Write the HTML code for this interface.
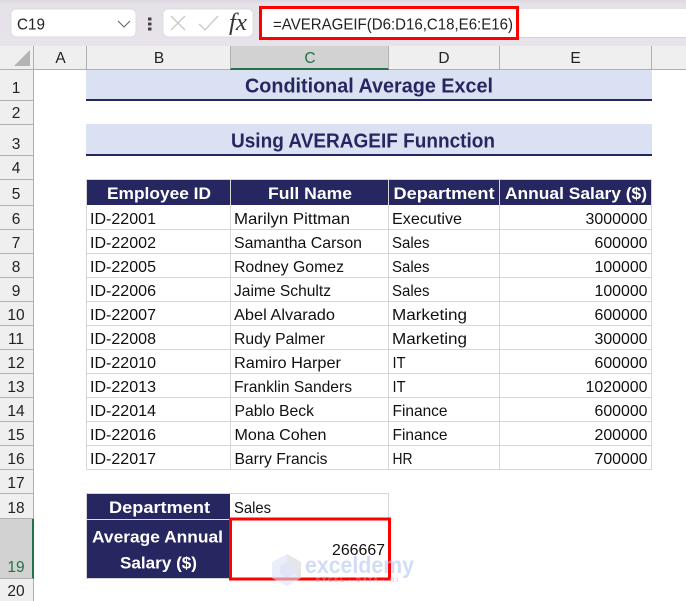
<!DOCTYPE html>
<html><head><meta charset="utf-8"><style>
html,body{margin:0;padding:0;background:#fff;width:686px;height:601px;overflow:hidden}
svg{display:block}
text{font-family:"Liberation Sans",sans-serif;font-size:16px;fill:#111}
.b{font-weight:bold;font-size:16.5px;fill:#fff}
.t{font-weight:bold;font-size:20.5px;fill:#262660}
.h{fill:#222;font-size:15.5px;text-anchor:middle}
</style></head><body>
<svg width="686" height="601" viewBox="0 0 686 601" xmlns="http://www.w3.org/2000/svg">
<defs><linearGradient id="tb" x1="0" y1="0" x2="0" y2="1"><stop offset="0" stop-color="#dcd8de"/><stop offset=".1" stop-color="#e6e2e9"/><stop offset="1" stop-color="#e8e3ea"/></linearGradient></defs>
<rect width="686" height="601" fill="#fff"/>
<!-- toolbar -->
<rect width="686" height="46" fill="url(#tb)"/>
<rect x="11" y="9" width="125" height="28" rx="5" fill="#fff" stroke="#dcdcdc"/>
<text x="17" y="29.5" style="font-size:16px;fill:#222" textLength="28" lengthAdjust="spacingAndGlyphs">C19</text>
<path d="M118 21l6 6 6-6" fill="none" stroke="#666" stroke-width="1.1"/>
<rect x="148" y="17.5" width="3.5" height="3" fill="#444"/><rect x="148" y="22.5" width="3.5" height="3" fill="#444"/><rect x="148" y="27.5" width="3.5" height="3" fill="#444"/>
<rect x="163" y="9" width="90" height="28" rx="5" fill="#fff" stroke="#dcdcdc"/>
<path d="M171 16l14 14M185 16l-14 14" fill="none" stroke="#c8c8c8" stroke-width="1.3"/>
<path d="M199 24l6 6 13-14" fill="none" stroke="#c8c8c8" stroke-width="1.3"/>
<text x="229" y="30" style="font-family:'Liberation Serif',serif;font-style:italic;font-size:24px;fill:#333" textLength="18" lengthAdjust="spacingAndGlyphs">fx</text>
<rect x="259" y="9" width="427" height="28" fill="#fff"/>
<rect x="259" y="37" width="427" height="1" fill="#d8d4da"/>
<text x="273" y="29.5" style="font-size:15.5px;fill:#222" textLength="240" lengthAdjust="spacingAndGlyphs">=AVERAGEIF(D6:D16,C18,E6:E16)</text>
<rect x="260.5" y="7.5" width="257" height="31" fill="none" stroke="#f00" stroke-width="3"/>
<!-- headers -->
<rect y="46" width="686" height="24" fill="#efefef"/>
<rect x="0" y="70" width="33.5" height="531" fill="#efefef"/>
<rect x="230.5" y="46" width="158" height="23" fill="#d2d2d2"/>
<rect x="230" y="68" width="159" height="2" fill="#217346"/>
<rect x="0" y="69" width="230" height="1" fill="#b0b0b0"/><rect x="389" y="69" width="297" height="1" fill="#b0b0b0"/>
<path d="M30 50v16H14z" fill="#b4b4b4"/>
<g fill="#b0b0b0"><rect x="33" y="46" width="1" height="24"/><rect x="86" y="46" width="1" height="24"/><rect x="230" y="46" width="1" height="23"/><rect x="388" y="46" width="1" height="23"/><rect x="499" y="46" width="1" height="24"/><rect x="651" y="46" width="1" height="24"/><rect x="33" y="70" width="1" height="531"/></g>
<g>
<text class="h" x="60.5" y="63">A</text><text class="h" x="159" y="63">B</text><text class="h" x="310" y="63" style="fill:#217346">C</text><text class="h" x="444" y="63">D</text><text class="h" x="575.5" y="63">E</text>
</g>
<rect x="0" y="519" width="33" height="60" fill="#d2d2d2"/><rect x="32" y="519" width="2" height="60" fill="#217346"/>
<g fill="#b0b0b0"><rect y="100" width="33" height="1"/><rect y="124" width="33" height="1"/><rect y="155" width="33" height="1"/><rect y="179" width="33" height="1"/><rect y="205" width="33" height="1"/><rect y="229" width="33" height="1"/><rect y="253" width="33" height="1"/><rect y="277" width="33" height="1"/><rect y="301" width="33" height="1"/><rect y="325" width="33" height="1"/><rect y="349" width="33" height="1"/><rect y="373" width="33" height="1"/><rect y="397" width="33" height="1"/><rect y="421" width="33" height="1"/><rect y="445" width="33" height="1"/><rect y="469" width="33" height="1"/><rect y="493" width="33" height="1"/><rect y="518" width="33" height="1"/><rect y="578" width="33" height="1"/></g>
<g>
<text class="h" x="16" y="93">1</text><text class="h" x="16" y="118">2</text><text class="h" x="16" y="149">3</text><text class="h" x="16" y="173">4</text><text class="h" x="16" y="199">5</text><text class="h" x="16" y="224">6</text><text class="h" x="16" y="248">7</text><text class="h" x="16" y="272">8</text><text class="h" x="16" y="296">9</text><text class="h" x="16" y="320">10</text><text class="h" x="16" y="344">11</text><text class="h" x="16" y="368">12</text><text class="h" x="16" y="392">13</text><text class="h" x="16" y="416">14</text><text class="h" x="16" y="440">15</text><text class="h" x="16" y="464">16</text><text class="h" x="16" y="488">17</text><text class="h" x="16" y="513">18</text><text class="h" x="16" y="572" style="fill:#217346">19</text><text class="h" x="16" y="596">20</text>
</g>
<!-- title bands -->
<rect x="86" y="70" width="566" height="29" fill="#d9e1f2"/><rect x="86" y="99" width="566" height="2" fill="#262660"/>
<rect x="86" y="124" width="566" height="30" fill="#d9e1f2"/><rect x="86" y="154" width="566" height="2" fill="#262660"/>
<text class="t" x="245" y="92.5" textLength="248" lengthAdjust="spacingAndGlyphs">Conditional Average Excel</text>
<text class="t" x="231" y="147.5" textLength="264" lengthAdjust="spacingAndGlyphs">Using AVERAGEIF Funnction</text>
<!-- table -->
<rect x="86" y="180" width="566" height="25" fill="#262660"/>
<g fill="#d6d6d6">
<rect x="86" y="179" width="566" height="1"/>
<rect x="86" y="229" width="566" height="1"/><rect x="86" y="253" width="566" height="1"/><rect x="86" y="277" width="566" height="1"/><rect x="86" y="301" width="566" height="1"/><rect x="86" y="325" width="566" height="1"/><rect x="86" y="349" width="566" height="1"/><rect x="86" y="373" width="566" height="1"/><rect x="86" y="397" width="566" height="1"/><rect x="86" y="421" width="566" height="1"/><rect x="86" y="445" width="566" height="1"/><rect x="86" y="469" width="566" height="1"/>
<rect x="86" y="180" width="1" height="290"/><rect x="230" y="180" width="1" height="290"/><rect x="388" y="180" width="1" height="290"/><rect x="499" y="180" width="1" height="290"/><rect x="651" y="180" width="1" height="290"/>
</g>
<text class="b" x="107" y="199" textLength="104" lengthAdjust="spacingAndGlyphs">Employee ID</text>
<text class="b" x="268" y="199" textLength="84" lengthAdjust="spacingAndGlyphs">Full Name</text>
<text class="b" x="393.5" y="199" textLength="101" lengthAdjust="spacingAndGlyphs">Department</text>
<text class="b" x="505" y="199" textLength="142" lengthAdjust="spacingAndGlyphs">Annual Salary ($)</text>
<g>
<text x="90" y="224" textLength="66" lengthAdjust="spacingAndGlyphs">ID-22001</text><text x="234" y="224" textLength="116" lengthAdjust="spacingAndGlyphs">Marilyn Pittman</text><text x="392" y="224" textLength="70" lengthAdjust="spacingAndGlyphs">Executive</text><text x="585.5" y="224" textLength="62" lengthAdjust="spacingAndGlyphs">3000000</text>
<text x="90" y="248" textLength="66" lengthAdjust="spacingAndGlyphs">ID-22002</text><text x="234" y="248" textLength="128" lengthAdjust="spacingAndGlyphs">Samantha Carson</text><text x="392" y="248" textLength="37.5" lengthAdjust="spacingAndGlyphs">Sales</text><text x="594.5" y="248" textLength="53" lengthAdjust="spacingAndGlyphs">600000</text>
<text x="90" y="272" textLength="66" lengthAdjust="spacingAndGlyphs">ID-22005</text><text x="234" y="272" textLength="110" lengthAdjust="spacingAndGlyphs">Rodney Gomez</text><text x="392" y="272" textLength="37.5" lengthAdjust="spacingAndGlyphs">Sales</text><text x="594.5" y="272" textLength="53" lengthAdjust="spacingAndGlyphs">100000</text>
<text x="90" y="296" textLength="66" lengthAdjust="spacingAndGlyphs">ID-22006</text><text x="234" y="296" textLength="97" lengthAdjust="spacingAndGlyphs">Jaime Schultz</text><text x="392" y="296" textLength="37.5" lengthAdjust="spacingAndGlyphs">Sales</text><text x="594.5" y="296" textLength="53" lengthAdjust="spacingAndGlyphs">100000</text>
<text x="90" y="320" textLength="66" lengthAdjust="spacingAndGlyphs">ID-22007</text><text x="234" y="320" textLength="101" lengthAdjust="spacingAndGlyphs">Abel Alvarado</text><text x="392" y="320" textLength="75" lengthAdjust="spacingAndGlyphs">Marketing</text><text x="594.5" y="320" textLength="53" lengthAdjust="spacingAndGlyphs">600000</text>
<text x="90" y="344" textLength="66" lengthAdjust="spacingAndGlyphs">ID-22008</text><text x="234" y="344" textLength="91" lengthAdjust="spacingAndGlyphs">Rudy Palmer</text><text x="392" y="344" textLength="75" lengthAdjust="spacingAndGlyphs">Marketing</text><text x="594.5" y="344" textLength="53" lengthAdjust="spacingAndGlyphs">300000</text>
<text x="90" y="368" textLength="66" lengthAdjust="spacingAndGlyphs">ID-22010</text><text x="234" y="368" textLength="107" lengthAdjust="spacingAndGlyphs">Ramiro Harper</text><text x="392.5" y="368" textLength="13" lengthAdjust="spacingAndGlyphs">IT</text><text x="594.5" y="368" textLength="53" lengthAdjust="spacingAndGlyphs">600000</text>
<text x="90" y="392" textLength="66" lengthAdjust="spacingAndGlyphs">ID-22013</text><text x="234" y="392" textLength="118" lengthAdjust="spacingAndGlyphs">Franklin Sanders</text><text x="392.5" y="392" textLength="13" lengthAdjust="spacingAndGlyphs">IT</text><text x="585.5" y="392" textLength="62" lengthAdjust="spacingAndGlyphs">1020000</text>
<text x="90" y="416" textLength="66" lengthAdjust="spacingAndGlyphs">ID-22014</text><text x="234.5" y="416" textLength="79.5" lengthAdjust="spacingAndGlyphs">Pablo Beck</text><text x="392.5" y="416" textLength="55" lengthAdjust="spacingAndGlyphs">Finance</text><text x="594.5" y="416" textLength="53" lengthAdjust="spacingAndGlyphs">600000</text>
<text x="90" y="440" textLength="66" lengthAdjust="spacingAndGlyphs">ID-22016</text><text x="234.5" y="440" textLength="92" lengthAdjust="spacingAndGlyphs">Mona Cohen</text><text x="392.5" y="440" textLength="55" lengthAdjust="spacingAndGlyphs">Finance</text><text x="594.5" y="440" textLength="53" lengthAdjust="spacingAndGlyphs">200000</text>
<text x="90" y="464" textLength="66" lengthAdjust="spacingAndGlyphs">ID-22017</text><text x="234.5" y="464" textLength="93" lengthAdjust="spacingAndGlyphs">Barry Francis</text><text x="392.5" y="464" textLength="20" lengthAdjust="spacingAndGlyphs">HR</text><text x="594.5" y="464" textLength="53" lengthAdjust="spacingAndGlyphs">700000</text>
</g>
<!-- lower table -->
<rect x="86" y="493" width="144" height="85" fill="#262660"/>
<rect x="86" y="519" width="144" height="1" fill="#e0e0e0"/>
<rect x="86" y="578" width="144" height="1" fill="#d6d6d6"/>
<rect x="86" y="493" width="303" height="1" fill="#d6d6d6"/><rect x="388" y="493" width="1" height="26" fill="#d6d6d6"/><rect x="86" y="493" width="1" height="86" fill="#d6d6d6"/>
<text class="b" x="109" y="513" textLength="101" lengthAdjust="spacingAndGlyphs">Department</text>
<text x="234" y="513" textLength="37" lengthAdjust="spacingAndGlyphs">Sales</text>
<text class="b" x="92" y="542.5" textLength="131" lengthAdjust="spacingAndGlyphs">Average Annual</text>
<text class="b" x="120" y="568.5" textLength="77" lengthAdjust="spacingAndGlyphs">Salary ($)</text>
<text x="332" y="555" textLength="53" lengthAdjust="spacingAndGlyphs">266667</text>
<rect x="230.5" y="519" width="159" height="60" fill="none" stroke="#f00" stroke-width="3"/>
<!-- watermark -->
<g opacity=".6">
<path d="M287 554l14 8v16l-14 8-15-8v-16z" fill="#dbe3f7"/>
<path d="M287 554l14 8v16l-14-8z" fill="#d4d6dc"/>
<path d="M280 566l7-4 7 4v8l-7 4-7-4z" fill="#ccd7f2"/>
<text x="305" y="573" textLength="109" lengthAdjust="spacingAndGlyphs" style="font-weight:bold;font-size:23px;fill:#b4c6f2">exceldemy</text>
<text x="316" y="582" textLength="82" lengthAdjust="spacing" style="font-weight:bold;font-size:6.5px;fill:#b8b8c4">EXCEL · DATA · BI</text>
</g>
</svg>
</body></html>
